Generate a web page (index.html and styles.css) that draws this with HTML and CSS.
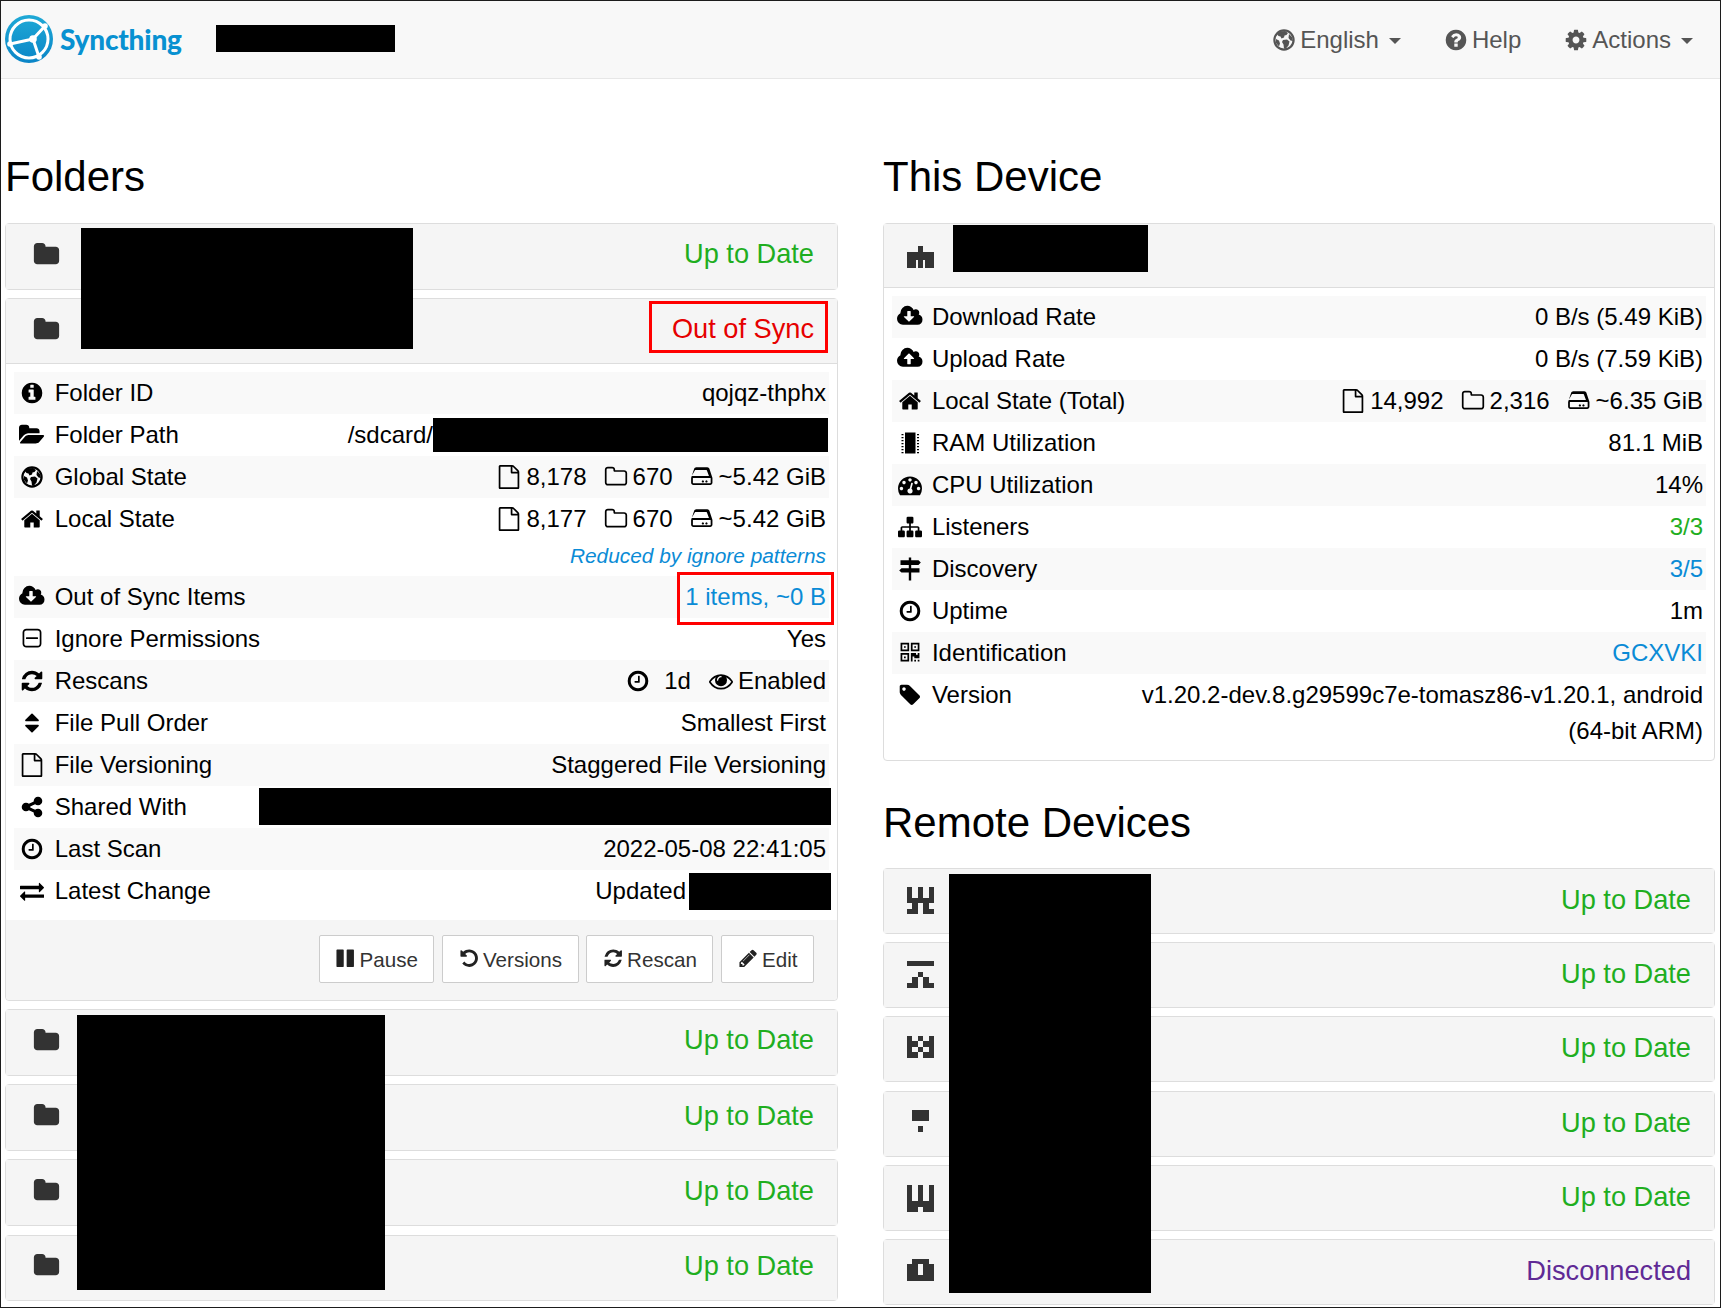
FILE: index.html
```html
<!DOCTYPE html>
<html lang="en">
<head>
<meta charset="utf-8">
<title>Syncthing</title>
<link rel="stylesheet" href="styles.css">
</head>
<body>
<svg class="sprite" xmlns="http://www.w3.org/2000/svg">
  <symbol id="i-folder" viewBox="0 0 1792 1792"><path d="M1728 608v704q0 92-66 158t-158 66h-1216q-92 0-158-66t-66-158v-960q0-92 66-158t158-66h320q92 0 158 66t66 158v32h672q92 0 158 66t66 158z"/></symbol>
  <symbol id="i-folder-o" viewBox="0 0 1792 1792"><path d="M1600 1312v-704q0-40-28-68t-68-28h-704q-40 0-68-28t-28-68v-64q0-40-28-68t-68-28h-320q-40 0-68 28t-28 68v960q0 40 28 68t68 28h1216q40 0 68-28t28-68zm128-704v704q0 92-66 158t-158 66h-1216q-92 0-158-66t-66-158v-960q0-92 66-158t158-66h320q92 0 158 66t66 158v32h672q92 0 158 66t66 158z"/></symbol>
  <symbol id="i-folder-open" viewBox="0 0 1920 1792"><path d="M1879 952q0 31-31 66l-336 396q-43 51-120.5 86.5t-143.5 35.5h-1088q-34 0-60.5-13t-26.5-43q0-31 31-66l336-396q43-51 120.5-86.5t143.5-35.5h1088q34 0 60.5 13t26.5 43zm-343-344v160h-832q-94 0-197 47.5t-164 119.5l-337 396-5 6q0-4-.5-12.5t-.5-12.5v-960q0-92 66-158t158-66h320q92 0 158 66t66 158v32h544q92 0 158 66t66 158z"/></symbol>
  <symbol id="i-info" viewBox="0 0 1792 1792"><path d="M1152 1376v-160q0-14-9-23t-23-9h-96v-512q0-14-9-23t-23-9h-320q-14 0-23 9t-9 23v160q0 14 9 23t23 9h96v320h-96q-14 0-23 9t-9 23v160q0 14 9 23t23 9h448q14 0 23-9t9-23zm-128-896v-160q0-14-9-23t-23-9h-192q-14 0-23 9t-9 23v160q0 14 9 23t23 9h192q14 0 23-9t9-23zm640 416q0 209-103 385.5t-279.5 279.5-385.5 103-385.5-103-279.5-279.5-103-385.5 103-385.5 279.5-279.5 385.5-103 385.5 103 279.5 279.5 103 385.5z"/></symbol>
  <symbol id="i-globe" viewBox="0 0 24 24"><path fill-rule="evenodd" d="M12 1.3a10.7 10.7 0 1 0 0 21.4a10.7 10.7 0 0 0 0-21.4zm0 2.2a8.5 8.5 0 1 1 0 17a8.5 8.5 0 0 1 0-17z"/><path d="M8 3.5l5-.5 3 2-1.5 2-2 .5-.5 2-2.5 1-1-2-2-.5L5 6zM11 12l4-.5 2.5 2-1 4-3 3.5-1.5-.5-.5-4-1.5-2.5zM17 6l3 3 1 4-2.5-.5-2-2.5zM4 11l3 1.5 1 3-1 3-3-3.5z"/></symbol>
  <symbol id="i-home" viewBox="0 0 1792 1792"><path d="M1472 992v480q0 26-19 45t-45 19h-384v-384h-256v384h-384q-26 0-45-19t-19-45v-480q0-1 .5-3t.5-3l575-474 575 474q1 2 1 6zm223-69l-62 74q-8 9-21 11h-3q-13 0-21-7l-692-577-692 577q-12 8-24 7-13-2-21-11l-62-74q-8-10-7-23.5t11-21.5l719-599q32-26 76-26t76 26l244 204v-195q0-14 9-23t23-9h192q14 0 23 9t9 23v408l219 182q10 8 11 21.5t-7 23.5z"/></symbol>
  <symbol id="i-down" viewBox="0 0 1920 1792"><path d="M1280 864q0-14-9-23t-23-9h-224v-352q0-13-9.5-22.5t-22.5-9.5h-192q-13 0-22.5 9.5t-9.5 22.5v352h-224q-13 0-22.5 9.5t-9.5 22.5q0 14 9 23l352 352q9 9 23 9t23-9l351-351q10-12 10-24zm640 224q0 159-112.5 271.5t-271.5 112.5h-1088q-185 0-316.5-131.5t-131.5-316.5q0-130 70-240t188-165q-2-30-2-43 0-212 150-362t362-150q156 0 285.5 87t188.5 231q71-62 166-62 106 0 181 75t75 181q0 76-41 138 130 31 213.5 135.5t83.5 238.5z"/></symbol>
  <symbol id="i-up" viewBox="0 0 1920 1792"><path d="M1280 864q0-14-9-23l-352-352q-9-9-23-9t-23 9l-351 351q-10 12-10 24 0 14 9 23t23 9h224v352q0 13 9.5 22.5t22.5 9.5h192q13 0 22.5-9.5t9.5-22.5v-352h224q13 0 22.5-9.5t9.5-22.5zm640 224q0 159-112.5 271.5t-271.5 112.5h-1088q-185 0-316.5-131.5t-131.5-316.5q0-130 70-240t188-165q-2-30-2-43 0-212 150-362t362-150q156 0 285.5 87t188.5 231q71-62 166-62 106 0 181 75t75 181q0 76-41 138 130 31 213.5 135.5t83.5 238.5z"/></symbol>
  <symbol id="i-minus" viewBox="0 0 1792 1792"><path d="M1344 800v64q0 14-9 23t-23 9h-832q-14 0-23-9t-9-23v-64q0-14 9-23t23-9h832q14 0 23 9t9 23zm128 448v-832q0-66-47-113t-113-47h-832q-66 0-113 47t-47 113v832q0 66 47 113t113 47h832q66 0 113-47t47-113zm128-832v832q0 119-84.5 203.5t-203.5 84.5h-832q-119 0-203.5-84.5t-84.5-203.5v-832q0-119 84.5-203.5t203.5-84.5h832q119 0 203.5 84.5t84.5 203.5z"/></symbol>
  <symbol id="i-refresh" viewBox="0 0 1792 1792"><path d="M1639 1056q0 5-1 7-64 268-268 434.5t-478 166.5q-146 0-282.5-55t-243.5-157l-129 129q-19 19-45 19t-45-19-19-45v-448q0-26 19-45t45-19h448q26 0 45 19t19 45-19 45l-137 137q71 66 161 102t187 36q134 0 250-65t186-179q11-17 53-117 8-23 30-23h192q13 0 22.5 9.5t9.5 22.5zm25-800v448q0 26-19 45t-45 19h-448q-26 0-45-19t-19-45 19-45l138-138q-148-137-349-137-134 0-250 65t-186 179q-11 17-53 117-8 23-30 23h-199q-13 0-22.5-9.5t-9.5-22.5v-7q65-268 270-434.5t480-166.5q146 0 284 55.5t245 156.5l130-129q19-19 45-19t45 19 19 45z"/></symbol>
  <symbol id="i-sort" viewBox="0 0 1792 1792"><path d="M1408 1088q0 26-19 45l-448 448q-19 19-45 19t-45-19l-448-448q-19-19-19-45t19-45 45-19h896q26 0 45 19t19 45zm0-384q0 26-19 45t-45 19h-896q-26 0-45-19t-19-45 19-45l448-448q19-19 45-19t45 19l448 448q19 19 19 45z"/></symbol>
  <symbol id="i-file" viewBox="0 0 1792 1792"><path d="M1596 380q28 28 48 76t20 88v1152q0 40-28 68t-68 28h-1344q-40 0-68-28t-28-68v-1600q0-40 28-68t68-28h896q40 0 88 20t76 48zm-444-244v376h376q-10-29-22-41l-313-313q-12-12-41-22zm384 1528v-1024h-416q-40 0-68-28t-28-68v-416h-768v1536h1280z"/></symbol>
  <symbol id="i-share" viewBox="0 0 1792 1792"><path d="M1344 1024q133 0 226.5 93.5t93.5 226.5-93.5 226.5-226.5 93.5-226.5-93.5-93.5-226.5q0-12 2-34l-360-180q-92 86-218 86-133 0-226.5-93.5t-93.5-226.5 93.5-226.5 226.5-93.5q126 0 218 86l360-180q-2-22-2-34 0-133 93.5-226.5t226.5-93.5 226.5 93.5 93.5 226.5-93.5 226.5-226.5 93.5q-126 0-218-86l-360 180q2 22 2 34t-2 34l360 180q92-86 218-86z"/></symbol>
  <symbol id="i-clock" viewBox="0 0 1792 1792"><path d="M1024 544v448q0 14-9 23t-23 9h-320q-14 0-23-9t-9-23v-64q0-14 9-23t23-9h224v-352q0-14 9-23t23-9h64q14 0 23 9t9 23zm416 352q0-148-73-273t-198-198-273-73-273 73-198 198-73 273 73 273 198 198 273 73 273-73 198-198 73-273zm224 0q0 209-103 385.5t-279.5 279.5-385.5 103-385.5-103-279.5-279.5-103-385.5 103-385.5 279.5-279.5 385.5-103 385.5 103 279.5 279.5 103 385.5z"/></symbol>
  <symbol id="i-exchange" viewBox="0 0 1792 1792"><path d="M1792 1184v192q0 13-9.5 22.5t-22.5 9.5h-1376v192q0 13-9.5 22.5t-22.5 9.5q-12 0-24-10l-319-320q-9-9-9-22 0-14 9-23l320-320q9-9 23-9 13 0 22.5 9.5t9.5 22.5v192h1376q13 0 22.5 9.5t9.5 22.5zm0-544q0 14-9 23l-320 320q-9 9-23 9-13 0-22.5-9.5t-9.5-22.5v-192h-1376q-13 0-22.5-9.5t-9.5-22.5v-192q0-13 9.5-22.5t22.5-9.5h1376v-192q0-14 9-23t23-9q12 0 24 10l319 319q9 9 9 23z"/></symbol>
  <symbol id="i-hdd" viewBox="32 32 1728 1728"><path d="M1040 1216q0 33-23.5 56.5t-56.5 23.5-56.5-23.5-23.5-56.5 23.5-56.5 56.5-23.5 56.5 23.5 23.5 56.5zm256 0q0 33-23.5 56.5t-56.5 23.5-56.5-23.5-23.5-56.5 23.5-56.5 56.5-23.5 56.5 23.5 23.5 56.5zm224 96v-320q0-13-9.5-22.5t-22.5-9.5h-1216q-13 0-22.5 9.5t-9.5 22.5v320q0 13 9.5 22.5t22.5 9.5h1216q13 0 22.5-9.5t9.5-22.5zm-1366-480h1244l-148-412q-3-10-13-18t-23-8h-800q-13 0-23 8t-13 18zm1494 160v320q0 66-47 113t-113 47h-1216q-66 0-113-47t-47-113v-320q0-25 16-75l197-606q17-52 61-85t94-33h800q50 0 94 33t61 85l197 606q16 50 16 75z"/></symbol>
  <symbol id="i-eye" viewBox="0 0 1792 1792"><path d="M1664 960q-152-236-381-353 61 104 61 225 0 185-131.5 316.5t-316.5 131.5-316.5-131.5-131.5-316.5q0-121 61-225-229 117-381 353 133 205 333.5 326.5t434.5 121.5 434.5-121.5 333.5-326.5zm-720-384q0-20-14-34t-34-14q-125 0-214.5 89.5t-89.5 214.5q0 20 14 34t34 14 34-14 14-34q0-86 61-147t147-61q20 0 34-14t14-34zm848 384q0 34-20 69-140 230-376.5 368.5t-499.5 138.5-499.5-139-376.5-368q-20-35-20-69t20-69q140-229 376.5-368t499.5-139 499.5 139 376.5 368q20 35 20 69z"/></symbol>
  <symbol id="i-chip" viewBox="0 0 24 24"><path d="M7 1.5h10.5v21H7z"/><path d="M3.5 3h2v1.2h-2zM3.5 6h2v1.2h-2zM3.5 9h2v1.2h-2zM3.5 12h2v1.2h-2zM3.5 15h2v1.2h-2zM3.5 18h2v1.2h-2zM3.5 21h2v1.2h-2zM19 3h2v1.2h-2zM19 6h2v1.2h-2zM19 9h2v1.2h-2zM19 12h2v1.2h-2zM19 15h2v1.2h-2zM19 18h2v1.2h-2zM19 21h2v1.2h-2z"/></symbol>
  <symbol id="i-dash" viewBox="0 0 1792 1792"><path d="M384 1152q0-53-37.5-90.5t-90.5-37.5-90.5 37.5-37.5 90.5 37.5 90.5 90.5 37.5 90.5-37.5 37.5-90.5zm192-448q0-53-37.5-90.5t-90.5-37.5-90.5 37.5-37.5 90.5 37.5 90.5 90.5 37.5 90.5-37.5 37.5-90.5zm428 481l101-382q6-26-7.5-48.5t-38.5-29.5-48 6.5-30 39.5l-101 382q-60 5-107 43.5t-63 98.5q-20 77 20 146t117 89 146-20 89-117q16-60-6-117t-72-91zm660-33q0-53-37.5-90.5t-90.5-37.5-90.5 37.5-37.5 90.5 37.5 90.5 90.5 37.5 90.5-37.5 37.5-90.5zm-640-640q0-53-37.5-90.5t-90.5-37.5-90.5 37.5-37.5 90.5 37.5 90.5 90.5 37.5 90.5-37.5 37.5-90.5zm448 192q0-53-37.5-90.5t-90.5-37.5-90.5 37.5-37.5 90.5 37.5 90.5 90.5 37.5 90.5-37.5 37.5-90.5zm320 448q0 261-141 483-19 29-54 29h-1402q-35 0-54-29-141-221-141-483 0-182 71-348t191-286 286-191 348-71 348 71 286 191 191 286 71 348z"/></symbol>
  <symbol id="i-sitemap" viewBox="0 0 1792 1792"><path d="M1792 1248v320q0 40-28 68t-68 28h-320q-40 0-68-28t-28-68v-320q0-40 28-68t68-28h96v-192h-512v192h96q40 0 68 28t28 68v320q0 40-28 68t-68 28h-320q-40 0-68-28t-28-68v-320q0-40 28-68t68-28h96v-192h-512v192h96q40 0 68 28t28 68v320q0 40-28 68t-68 28h-320q-40 0-68-28t-28-68v-320q0-40 28-68t68-28h96v-192q0-52 38-90t90-38h512v-192h-96q-40 0-68-28t-28-68v-320q0-40 28-68t68-28h320q40 0 68 28t28 68v320q0 40-28 68t-68 28h-96v192h512q52 0 90 38t38 90v192h96q40 0 68 28t28 68z"/></symbol>
  <symbol id="i-signs" viewBox="0 0 24 24"><path d="M10.8.5h2.4v2.8h7.3l2.3 2.3-2.3 2.3H2.5V3.3h8.3zM10.8 7.9h2.4v3.3h-2.4zM3.5 11.2h18v4.4h-18l-2.3-2.2zM10.8 15.6h2.4v8h-2.4z"/></symbol>
  <symbol id="i-qr" viewBox="0 0 1792 1792"><path d="M576 1152v128h-128v-128h128zm0-768v128h-128v-128h128zm768 0v128h-128v-128h128zm-1024 1023h384v-383h-384v383zm0-767h384v-384h-384v384zm768 0h384v-384h-384v384zm-256 256v640h-640v-640h640zm512 512v128h-128v-128h128zm256 0v128h-128v-128h128zm0-512v384h-384v-128h-128v384h-128v-640h384v128h128v-128h128zm-768-768v640h-640v-640h640zm768 0v640h-640v-640h640z"/></symbol>
  <symbol id="i-tag" viewBox="0 0 1792 1792"><path d="M576 448q0-53-37.5-90.5t-90.5-37.5-90.5 37.5-37.5 90.5 37.5 90.5 90.5 37.5 90.5-37.5 37.5-90.5zm1067 576q0 53-37 90l-491 492q-39 37-91 37-53 0-90-37l-715-716q-38-37-64.5-101t-26.5-117v-416q0-52 38-90t90-38h416q53 0 117 26.5t102 64.5l715 714q37 39 37 91z"/></symbol>
  <symbol id="i-question" viewBox="0 0 1792 1792"><path d="M1024 1376v-192q0-14-9-23t-23-9h-192q-14 0-23 9t-9 23v192q0 14 9 23t23 9h192q14 0 23-9t9-23zm256-672q0-88-55.5-163t-138.5-116-170-41q-243 0-371 213-15 24 8 42l132 100q7 6 19 6 16 0 25-12 53-68 86-92 34-24 86-24 48 0 85.5 26t37.5 59q0 38-20 61t-68 45q-63 28-115.5 86.5t-52.5 125.5v36q0 14 9 23t23 9h192q14 0 23-9t9-23q0-19 21.5-49.5t54.5-49.5q32-18 49-28.5t46-35 44.5-48 28-60.5 12.5-81zm384 192q0 209-103 385.5t-279.5 279.5-385.5 103-385.5-103-279.5-279.5-103-385.5 103-385.5 279.5-279.5 385.5-103 385.5 103 279.5 279.5 103 385.5z"/></symbol>
  <symbol id="i-cog" viewBox="0 0 1792 1792"><path d="M1152 896q0-106-75-181t-181-75-181 75-75 181 75 181 181 75 181-75 75-181zm512-109v222q0 12-8 23t-20 13l-185 28q-19 54-39 91 35 50 107 138 10 12 10 25t-9 23q-27 37-99 108t-94 71q-12 0-26-9l-138-108q-44 23-91 38-16 136-29 186-7 28-36 28h-222q-14 0-24.5-8.5t-11.5-21.5l-28-184q-49-16-90-37l-141 107q-10 9-25 9-14 0-25-11-126-114-165-168-7-10-7-23 0-12 8-23 15-21 51-66.5t54-70.5q-27-50-41-99l-183-27q-13-2-21-12.5t-8-23.5v-222q0-12 8-23t19-13l186-28q14-46 39-92-40-57-107-138-10-12-10-24 0-10 9-23 26-36 98.5-107.5t94.5-71.5q13 0 26 10l138 107q44-23 91-38 16-136 29-186 7-28 36-28h222q14 0 24.5 8.5t11.5 21.5l28 184q49 16 90 37l142-107q9-9 24-9 13 0 25 10 129 119 165 170 7 8 7 22 0 12-8 23-15 21-51 66.5t-54 70.5q26 50 41 98l183 28q13 2 21 12.5t8 23.5z"/></symbol>
  <symbol id="i-pause" viewBox="0 0 1792 1792"><path d="M1664 192v1408q0 26-19 45t-45 19h-512q-26 0-45-19t-19-45v-1408q0-26 19-45t45-19h512q26 0 45 19t19 45zm-896 0v1408q0 26-19 45t-45 19h-512q-26 0-45-19t-19-45v-1408q0-26 19-45t45-19h512q26 0 45 19t19 45z"/></symbol>
  <symbol id="i-undo" viewBox="0 0 1792 1792"><path d="M1664 896q0 156-61 298t-164 245-245 164-298 61q-172 0-327-72.5t-264-204.5q-7-10-6.5-22.5t8.5-20.5l137-138q10-9 25-9 16 2 23 12 73 95 179 147t225 52q104 0 198.5-40.5t163.5-109.5 109.5-163.5 40.5-198.5-40.5-198.5-109.5-163.5-163.5-109.5-198.5-40.5q-98 0-188 35.5t-160 101.5l137 138q31 30 14 69-17 40-59 40h-448q-26 0-45-19t-19-45v-448q0-42 40-59 39-17 69 14l130 129q107-101 244.5-156.5t284.5-55.5q156 0 298 61t245 164 164 245 61 298z"/></symbol>
  <symbol id="i-pencil" viewBox="0 0 1792 1792"><path d="M491 1536l91-91-235-235-91 91v107h128v128h107zm523-928q0-22-22-22-10 0-17 7l-542 542q-7 7-7 17 0 22 22 22 10 0 17-7l542-542q7-7 7-17zm-54-192l416 416-832 832h-416v-416zm683 96q0 53-37 90l-166 166-416-416 166-165q36-38 90-38 53 0 91 38l235 234q37 39 37 91z"/></symbol>
  <symbol id="id-self" viewBox="0 0 5 5"><path d="M2 1h1v1h-1zM0 2h5v1.6h-5zM0 3.6h1.7v1.4h-1.7zM2.1 3.6h.8v1.4h-.8zM3.3 3.6h1.7v1.4h-1.7z"/></symbol>
  <symbol id="id-1" viewBox="0 0 5 5"><path d="M0 0h1v3h-1zM2 0h1v3h-1zM4 0h1v3h-1zM0 2h5v1h-5zM1 3h1v2h-1zM3 3h1v2h-1zM0 4h2v1h-2zM3 4h2v1h-2z"/></symbol>
  <symbol id="id-2" viewBox="0 0 5 5"><path d="M0 0h5v1h-5zM2 2h1v1h-1zM1 3h1v2h-1zM3 3h1v2h-1zM0 4h2v1h-2zM3 4h2v1h-2z"/></symbol>
  <symbol id="id-3" viewBox="0 0 5 5"><path d="M0 0h1v4h-1zM4 0h1v4h-1zM2 0h1v1h-1zM1 1h1v1h-1zM3 1h1v1h-1zM2 2h1v1h-1zM1 3h1v1h-1zM3 3h1v1h-1z"/></symbol>
  <symbol id="id-4" viewBox="0 0 5 5"><path d="M1 0h3v2h-3zM2 3h1v1h-1z"/></symbol>
  <symbol id="id-5" viewBox="0 0 5 5"><path d="M0 0h1v5h-1zM2 0h1v4h-1zM4 0h1v5h-1zM0 3h5v1h-5zM1 4h1v1h-1zM3 4h1v1h-1z"/></symbol>
  <symbol id="id-6" viewBox="0 0 5 5"><path d="M1 0h3v1h-3zM0 1h2v3h-2zM3 1h2v3h-2zM0 3h5v1h-5z"/></symbol>
</svg>

<nav class="navbar">
  <div class="brand">
    <svg class="logo" viewBox="0 0 48 48">
      <defs><linearGradient id="logo-grad" x1="0" y1="0" x2="0" y2="1"><stop offset="0" stop-color="#1fa9d6"/><stop offset="1" stop-color="#0a85c7"/></linearGradient></defs>
      <circle cx="24" cy="24" r="24" fill="url(#logo-grad)"/>
      <circle cx="24" cy="24" r="19" fill="none" stroke="#fff" stroke-width="3"/>
      <path d="M28 24L40 11M28 24L5 29M28 24L34 42" fill="none" stroke="#fff" stroke-width="3"/>
      <circle cx="28" cy="24" r="3.8" fill="#fff"/><circle cx="40" cy="11" r="2.8" fill="#fff"/><circle cx="5" cy="29" r="2.8" fill="#fff"/><circle cx="34" cy="42" r="2.8" fill="#fff"/>
    </svg>
    <span class="wordmark">Syncthing</span>
  </div>
  <ul class="nav-links">
    <li class="nav-item"><svg class="nav-ico"><use href="#i-globe"/></svg><span>English</span><i class="caret"></i></li>
    <li class="nav-item"><svg class="nav-ico"><use href="#i-question"/></svg><span>Help</span></li>
    <li class="nav-item"><svg class="nav-ico"><use href="#i-cog"/></svg><span>Actions</span><i class="caret"></i></li>
  </ul>
</nav>

<main class="page">
  <section class="col">
    <h1 class="title">Folders</h1>
    <div class="panel folder"><div class="head"><svg class="head-ico"><use href="#i-folder"/></svg><span class="status ok">Up to Date</span></div></div>
    <div class="panel open">
      <div class="head"><svg class="head-ico"><use href="#i-folder"/></svg><span class="status bad">Out of Sync</span></div>
      <div class="body">
        <div class="row"><span class="label"><svg class="ico"><use href="#i-info"/></svg>Folder ID</span><span class="val">qojqz-thphx</span></div>
        <div class="row"><span class="label"><svg class="ico wide"><use href="#i-folder-open"/></svg>Folder Path</span><span class="val">/sdcard/<span class="hidden-path"></span></span></div>
        <div class="row"><span class="label"><svg class="ico"><use href="#i-globe"/></svg>Global State</span><span class="val stats"><span class="stat"><svg class="ico-s"><use href="#i-file"/></svg>8,178</span><span class="stat"><svg class="ico-s"><use href="#i-folder-o"/></svg>670</span><span class="stat"><svg class="ico-s"><use href="#i-hdd"/></svg>~5.42 GiB</span></span></div>
        <div class="row"><span class="label"><svg class="ico"><use href="#i-home"/></svg>Local State</span><span class="val"><span class="stats"><span class="stat"><svg class="ico-s"><use href="#i-file"/></svg>8,177</span><span class="stat"><svg class="ico-s"><use href="#i-folder-o"/></svg>670</span><span class="stat"><svg class="ico-s"><use href="#i-hdd"/></svg>~5.42 GiB</span></span><em class="note">Reduced by ignore patterns</em></span></div>
        <div class="row"><span class="label"><svg class="ico wide"><use href="#i-down"/></svg>Out of Sync Items</span><a class="val link">1 items, ~0 B</a></div>
        <div class="row"><span class="label"><svg class="ico"><use href="#i-minus"/></svg>Ignore Permissions</span><span class="val">Yes</span></div>
        <div class="row"><span class="label"><svg class="ico"><use href="#i-refresh"/></svg>Rescans</span><span class="val stats"><span class="stat wide-gap"><svg class="ico-s"><use href="#i-clock"/></svg>1d</span><span class="stat"><svg class="ico-s"><use href="#i-eye"/></svg>Enabled</span></span></div>
        <div class="row"><span class="label"><svg class="ico"><use href="#i-sort"/></svg>File Pull Order</span><span class="val">Smallest First</span></div>
        <div class="row"><span class="label"><svg class="ico"><use href="#i-file"/></svg>File Versioning</span><span class="val">Staggered File Versioning</span></div>
        <div class="row"><span class="label"><svg class="ico"><use href="#i-share"/></svg>Shared With</span><span class="val"></span></div>
        <div class="row"><span class="label"><svg class="ico"><use href="#i-clock"/></svg>Last Scan</span><span class="val">2022-05-08 22:41:05</span></div>
        <div class="row"><span class="label"><svg class="ico"><use href="#i-exchange"/></svg>Latest Change</span><span class="val">Updated<span class="hidden-name"></span></span></div>
      </div>
      <div class="foot">
        <button class="btn"><svg class="btn-ico"><use href="#i-pause"/></svg>Pause</button>
        <button class="btn"><svg class="btn-ico"><use href="#i-undo"/></svg>Versions</button>
        <button class="btn"><svg class="btn-ico"><use href="#i-refresh"/></svg>Rescan</button>
        <button class="btn"><svg class="btn-ico"><use href="#i-pencil"/></svg>Edit</button>
      </div>
    </div>
    <div class="panel folder"><div class="head"><svg class="head-ico"><use href="#i-folder"/></svg><span class="status ok">Up to Date</span></div></div>
    <div class="panel folder"><div class="head"><svg class="head-ico"><use href="#i-folder"/></svg><span class="status ok">Up to Date</span></div></div>
    <div class="panel folder"><div class="head"><svg class="head-ico"><use href="#i-folder"/></svg><span class="status ok">Up to Date</span></div></div>
    <div class="panel folder"><div class="head"><svg class="head-ico"><use href="#i-folder"/></svg><span class="status ok">Up to Date</span></div></div>
  </section>

  <section class="col">
    <h1 class="title">This Device</h1>
    <div class="panel device-panel">
      <div class="head device-head"><svg class="identicon"><use href="#id-self"/></svg></div>
      <div class="body device-body">
        <div class="row"><span class="label"><svg class="ico wide"><use href="#i-down"/></svg>Download Rate</span><span class="val">0 B/s (5.49 KiB)</span></div>
        <div class="row"><span class="label"><svg class="ico wide"><use href="#i-up"/></svg>Upload Rate</span><span class="val">0 B/s (7.59 KiB)</span></div>
        <div class="row"><span class="label"><svg class="ico"><use href="#i-home"/></svg>Local State (Total)</span><span class="val stats"><span class="stat"><svg class="ico-s"><use href="#i-file"/></svg>14,992</span><span class="stat"><svg class="ico-s"><use href="#i-folder-o"/></svg>2,316</span><span class="stat"><svg class="ico-s"><use href="#i-hdd"/></svg>~6.35 GiB</span></span></div>
        <div class="row"><span class="label"><svg class="ico"><use href="#i-chip"/></svg>RAM Utilization</span><span class="val">81.1 MiB</span></div>
        <div class="row"><span class="label"><svg class="ico"><use href="#i-dash"/></svg>CPU Utilization</span><span class="val">14%</span></div>
        <div class="row"><span class="label"><svg class="ico"><use href="#i-sitemap"/></svg>Listeners</span><span class="val ok">3/3</span></div>
        <div class="row"><span class="label"><svg class="ico"><use href="#i-signs"/></svg>Discovery</span><span class="val link">3/5</span></div>
        <div class="row"><span class="label"><svg class="ico"><use href="#i-clock"/></svg>Uptime</span><span class="val">1m</span></div>
        <div class="row"><span class="label"><svg class="ico"><use href="#i-qr"/></svg>Identification</span><a class="val link">GCXVKI</a></div>
        <div class="row version"><span class="label"><svg class="ico"><use href="#i-tag"/></svg>Version</span><span class="val">v1.20.2-dev.8.g29599c7e-tomasz86-v1.20.1, android<br>(64-bit ARM)</span></div>
      </div>
    </div>
    <h1 class="title remote-title">Remote Devices</h1>
    <div class="panel remote"><div class="head"><svg class="identicon"><use href="#id-1"/></svg><span class="status ok">Up to Date</span></div></div>
    <div class="panel remote"><div class="head"><svg class="identicon"><use href="#id-2"/></svg><span class="status ok">Up to Date</span></div></div>
    <div class="panel remote"><div class="head"><svg class="identicon"><use href="#id-3"/></svg><span class="status ok">Up to Date</span></div></div>
    <div class="panel remote"><div class="head"><svg class="identicon"><use href="#id-4"/></svg><span class="status ok">Up to Date</span></div></div>
    <div class="panel remote"><div class="head"><svg class="identicon"><use href="#id-5"/></svg><span class="status ok">Up to Date</span></div></div>
    <div class="panel remote"><div class="head"><svg class="identicon"><use href="#id-6"/></svg><span class="status off">Disconnected</span></div></div>
  </section>
</main>

<div class="redact r-nav"></div>
<div class="redact r-folder-top"></div>
<div class="redact r-path"></div>
<div class="redact r-shared"></div>
<div class="redact r-latest"></div>
<div class="redact r-folder-low"></div>
<div class="redact r-device"></div>
<div class="redact r-remote"></div>
<div class="mark m-status"></div>
<div class="mark m-items"></div>
</body>
</html>
```
FILE: styles.css
```css
* { box-sizing: border-box; }
html { height: 1308px; overflow: hidden; }
body {
  margin: 0;
  height: 1308px;
  overflow: hidden;
  border: 1px solid #1c1c1c;
  background: #fff;
  color: #000;
  font-family: "Liberation Sans", Arial, sans-serif;
  font-size: 24px;
  line-height: 34px;
}
.sprite { display: none; }
svg { fill: currentColor; flex: none; }

/* navbar */
.navbar {
  height: 78px;
  display: flex;
  align-items: center;
  justify-content: space-between;
  background: #f8f8f8;
  border-bottom: 1px solid #e7e7e7;
  padding: 0 27px 0 4px;
}
.brand { display: flex; align-items: center; gap: 7px; }
.logo { width: 48px; height: 48px; margin-top: -1px; }
.wordmark {
  font-family: Lato, "Open Sans", sans-serif;
  font-weight: 900;
  font-size: 28px;
  color: #0891d1;
  letter-spacing: -0.2px;
  margin-top: -2px;
}
.nav-links { display: flex; gap: 45px; list-style: none; margin: 0; padding: 0; }
.nav-item { display: flex; align-items: center; color: #555; }
.nav-ico { width: 24px; height: 24px; margin-right: 4px; margin-left: -2px; }
.caret {
  width: 0;
  height: 0;
  margin-left: 10px;
  margin-top: 3px;
  border-top: 6.8px solid #555;
  border-left: 6.8px solid transparent;
  border-right: 6.8px solid transparent;
}

/* page */
.page {
  display: grid;
  grid-template-columns: 833px 832px;
  column-gap: 45px;
  padding: 75px 0 0 4px;
}
.title {
  margin: 0 0 24px;
  font-size: 42px;
  line-height: 45px;
  font-weight: 400;
  color: #000;
}
.remote-title { margin-top: 39px; margin-bottom: 23px; }

/* panels */
.panel {
  border: 1px solid #ddd;
  border-radius: 4px;
  margin-bottom: 8.4px;
  background: #fff;
}
.head {
  display: flex;
  align-items: center;
  justify-content: space-between;
  background: #f5f5f5;
  padding: 0 23px 5px 23px;
}
.folder .head { height: 64.8px; padding-bottom: 4px; }
.open .head { height: 64.5px; padding-bottom: 3px; border-bottom: 1px solid #ddd; }
.remote .head { height: 64px; padding-bottom: 0; }
.remote .status { margin-bottom: 2px; }
.device-head { height: 64px; padding-bottom: 0; border-bottom: 1px solid #ddd; }
.head-ico { width: 35px; height: 27.2px; color: #333; }
.identicon { width: 27px; height: 27px; color: #333; shape-rendering: crispEdges; }
.device-head .identicon { margin-top: -3px; }
.status { font-size: 27.2px; line-height: 38px; }
.ok { color: #1fae1f; }
.bad { color: #e60000; }
.off { color: #5f2a95; }
.link { color: #0a8bd6; }

.body { padding: 8px; }
.device-body { padding: 7.5px 8px 8px; }
.row {
  display: flex;
  justify-content: space-between;
  min-height: 42px;
  padding: 4px 3px 4px 6px;
}
.row:nth-child(odd) { background: #f9f9f9; }
.label { display: flex; align-items: flex-start; white-space: nowrap; }
.ico { width: 24px; height: 24px; margin: 5px 10.7px 0 0; }
.ico.wide { width: 25.7px; margin: 5px 9.8px 0 -0.8px; }
.device-body .ico { margin-right: 9.9px; }
.device-body .ico.wide { margin-right: 9px; }
.val { text-align: right; }
.stats { display: flex; justify-content: flex-end; gap: 19px; }
.stat { display: flex; align-items: center; }
.ico-s { width: 24px; height: 24px; margin-right: 5px; margin-left: -2px; }
.stat.wide-gap { margin-right: 1px; }
.stat.wide-gap .ico-s { margin-right: 14px; }
.note { display: block; font-size: 20.85px; line-height: 32px; padding-top: 4px; color: #0a8bd6; }
.hidden-path { display: inline-block; width: 393px; }
.hidden-name { display: inline-block; width: 140px; }
.version { padding-top: 3px; padding-bottom: 3px; line-height: 36px; }
.version .ico { margin-top: 6px; }

/* footer */
.foot {
  display: flex;
  justify-content: flex-end;
  gap: 7.7px;
  height: 80px;
  padding: 15px 23px 0 0;
  background: #f5f5f5;
  border-radius: 0 0 4px 4px;
}
.btn {
  display: flex;
  align-items: center;
  height: 48px;
  padding: 2px 15.5px 0;
  background: #fff;
  border: 1px solid #ccc;
  border-radius: 2px;
  color: #333;
  font: inherit;
  font-size: 20.6px;
  line-height: 28px;
}
.btn-ico { width: 20.4px; height: 20.4px; margin-right: 4px; margin-top: -2px; color: #222; }

/* overlays: redaction bars and red annotation frames painted over the capture */
.redact { position: absolute; background: #000; }
.r-nav { left: 216px; top: 25px; width: 179px; height: 27px; }
.r-folder-top { left: 81px; top: 228px; width: 332px; height: 121px; }
.r-path { left: 433px; top: 418px; width: 395px; height: 34px; }
.r-shared { left: 259px; top: 788px; width: 572px; height: 37px; }
.r-latest { left: 689px; top: 873px; width: 142px; height: 37px; }
.r-folder-low { left: 77px; top: 1015px; width: 308px; height: 275px; }
.r-device { left: 953px; top: 225px; width: 195px; height: 47px; }
.r-remote { left: 949px; top: 874px; width: 202px; height: 419px; }
.mark { position: absolute; border: 3px solid #f00; }
.m-status { left: 649px; top: 301px; width: 179px; height: 52px; }
.m-items { left: 677px; top: 572px; width: 157px; height: 53px; }
```
